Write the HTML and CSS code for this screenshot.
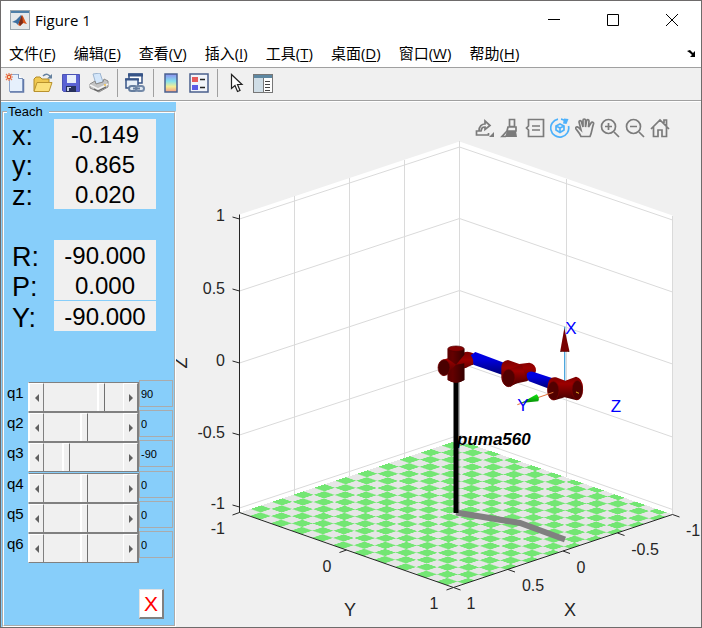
FILE: index.html
```html
<!DOCTYPE html>
<html lang="zh-CN">
<head>
    <meta charset="UTF-8">
    <meta name="viewport" content="width=device-width, initial-scale=1.0">
    <title>Figure 1</title>

    <link rel="stylesheet" href="styles.css">
</head>
<body>
    <header class="titlebar">
        <svg class="app-icon" viewBox="0 0 20 20">
            <rect x=".5" y=".5" width="19" height="19" fill="#e4e8ea" stroke="#9aa6ae"/>
            <rect x="1" y="1" width="18" height="2" fill="#4d7fa8"/>
            <path d="M2 12l4-2 5-5 1 2-4 8-2-2z" fill="#3c6fa0"/>
            <path d="M8 15l4-10c2 2 3 7 5 9l-4-1-3 3z" fill="#d9541a"/>
            <path d="M12 5l1 8-3 3-1-3z" fill="#7c2a16"/>
        </svg>
        <h1>Figure 1</h1>
        <div class="window-buttons">
            <button aria-label="最小化"><svg viewBox="0 0 12 12"><path d="M0 5.500h12"/></svg></button>
            <button aria-label="最大化"><svg viewBox="0 0 12 12"><path d="M.5.5h11v11H.5z"/></svg></button>
            <button aria-label="关闭"><svg viewBox="0 0 12 12"><path d="M0 0l12 12M12 0L0 12"/></svg></button>
        </div>
    </header>

    <nav class="menubar">
        <button>文件(<u>F</u>)</button>
        <button>编辑(<u>E</u>)</button>
        <button>查看(<u>V</u>)</button>
        <button>插入(<u>I</u>)</button>
        <button>工具(<u>T</u>)</button>
        <button>桌面(<u>D</u>)</button>
        <button>窗口(<u>W</u>)</button>
        <button>帮助(<u>H</u>)</button>
        <button class="dock" aria-label="停靠"><svg viewBox="0 0 10 8"><path d="M0 2l3-1 3 3 2-2v6H3l2-2-2-2z"/></svg></button>
    </nav>

    <div class="toolbar">
        <button aria-label="新建图窗">
            <svg viewBox="0 0 20 20">
                <path d="M4.500 1.500h9l4 4v13h-13z" fill="#e6f0fc" stroke="#8fa6cc"/>
                <path d="M13.500 1v4.500h4.500" fill="#fff" stroke="#7d93b8"/>
                <path d="M5 19h13.500V6" fill="none" stroke="#6178a8" stroke-width="1.500"/>
                <path d="M4 0v8M0 4h8M1 1l6 6M7 1L1 7" stroke="#ea7a50" stroke-width="1.200"/>
                <circle cx="4" cy="4" r="1.700" fill="#ffd9a8" stroke="#e0562c"/>
            </svg>
        </button>
        <button aria-label="打开">
            <svg viewBox="0 0 20 20">
                <path d="M1 18V6l2-2h4l2 2h7v4" fill="#f0c850" stroke="#b08a28"/>
                <path d="M1 18.500l3-9h15l-3 9z" fill="#fbe07a" stroke="#b9922d"/>
                <path d="M10 3c3-3 6-2 8 2" fill="none" stroke="#65819f" stroke-width="1.500"/>
                <path d="M14 5.500h5V1z" fill="#65819f"/>
            </svg>
        </button>
        <button aria-label="保存">
            <svg viewBox="0 0 20 20">
                <path d="M1.500 1.500h17v17h-16l-1-1z" fill="#5a62d4" stroke="#4b53b4"/>
                <path d="M6 2h9v8H6z" fill="#e8effb"/>
                <path d="M5 13h10v6H5z" fill="#27305c"/>
                <path d="M6 14h4v4H6z" fill="#c9d3e6"/>
                <path d="M8 15h2v3H8z" fill="#27305c"/>
            </svg>
        </button>
        <button aria-label="打印">
            <svg viewBox="0 0 20 20">
                <path d="M4 1l7-1 3 9-7 2z" fill="#d3e6fa" stroke="#9db4cf"/>
                <path d="M1 11l5-3 1 3 7-2 1-3 4 2v6l-9 5-9-4z" fill="#c4c4c4" stroke="#8a8a8a"/>
                <path d="M1 12l8 4 10-5" fill="none" stroke="#f4f4f4" stroke-width="1.500"/>
                <path d="M5 16l4 2 8-4" fill="none" stroke="#555"/>
                <circle cx="16" cy="12" r="1" fill="#f0c04a"/>
            </svg>
        </button>
        <span class="sep"></span>
        <button aria-label="链接绘图">
            <svg viewBox="0 0 20 20">
                <rect x="4" y="1" width="13" height="9" fill="#fff" stroke="#375487" stroke-width="1.500"/>
                <path d="M3 2h15" stroke="#375487" stroke-width="3"/>
                <rect x="1" y="6" width="12" height="9" fill="#e9f0f8" stroke="#375487" stroke-width="1.500"/>
                <path d="M0 6.500h14" stroke="#375487" stroke-width="2"/>
                <rect x="4" y="13" width="8" height="5" rx="2.500" fill="#dfe8f2" stroke="#657d9e" stroke-width="2"/>
                <rect x="11" y="13" width="8" height="5" rx="2.500" fill="#dfe8f2" stroke="#7389a8" stroke-width="2"/>
                <path d="M8 15.500h7" stroke="#657d9e" stroke-width="2"/>
            </svg>
        </button>
        <span class="sep"></span>
        <button aria-label="插入颜色栏">
            <svg viewBox="0 0 20 20">
                <defs>
                    <linearGradient id="colorbar" x2="0" y2="1">
                        <stop offset="0" stop-color="#8d8df0"/>
                        <stop offset=".4" stop-color="#84e2ee"/>
                        <stop offset=".7" stop-color="#f4ee94"/>
                        <stop offset="1" stop-color="#f39a85"/>
                    </linearGradient>
                </defs>
                <rect x="4" y="1" width="12" height="18" fill="url(#colorbar)" stroke="#4a6190" stroke-width="1.500"/>
            </svg>
        </button>
        <button aria-label="插入图例">
            <svg viewBox="0 0 20 20">
                <rect x="1" y="1" width="18" height="18" fill="#f1f4fa" stroke="#4a5f8c" stroke-width="1.500"/>
                <path d="M3 4h6v5H3z" fill="#e65a5a"/>
                <path d="M3 12h6v5H3z" fill="#5b5be6"/>
                <path d="M11 6.500h5M11 14.500h5" stroke="#222" stroke-width="1.500"/>
            </svg>
        </button>
        <span class="sep"></span>
        <button aria-label="编辑绘图">
            <svg viewBox="0 0 20 20">
                <path d="M6.500 1.500v14l3.500-3 2.500 6 2.500-1-2.500-6h4.500z" fill="#fff" stroke="#222" stroke-width="1.200"/>
            </svg>
        </button>
        <button aria-label="属性检查器">
            <svg viewBox="0 0 20 20">
                <rect x=".5" y="1.500" width="19" height="18" fill="#fdfdfd" stroke="#777"/>
                <path d="M1 2h18v3H1z" fill="#5d87a1"/>
                <path d="M1 5h9v14H1z" fill="#cfdde6"/>
                <path d="M10.500 5v14" stroke="#777"/>
                <path d="M12 8.500h5M12 11.500h5M12 14.500h5M12 17.500h5" stroke="#444"/>
            </svg>
        </button>
    </div>

    <main class="figure">
        <aside class="sidebar">
            <fieldset class="teach">
                <legend>Teach</legend>

                <div class="pose">
                    <div class="pose-row"><label for="pos-x">x:</label><output id="pos-x">-0.149</output></div>
                    <div class="pose-row"><label for="pos-y">y:</label><output id="pos-y">0.865</output></div>
                    <div class="pose-row"><label for="pos-z">z:</label><output id="pos-z">0.020</output></div>
                </div>
                <div class="pose">
                    <div class="pose-row"><label for="rot-r">R:</label><output id="rot-r">-90.000</output></div>
                    <div class="pose-row"><label for="rot-p">P:</label><output id="rot-p">0.000</output></div>
                    <div class="pose-row split"><label for="rot-y">Y:</label><output id="rot-y">-90.000</output></div>
                </div>

                <div class="joints">
                    <div class="joint">
                        <label for="q1">q1</label>
                        <div class="slider"><button class="prev" aria-label="q1 -"></button><input type="range" id="q1" min="-180" max="180" value="90"><button class="next" aria-label="q1 +"></button></div>
                        <input type="text" aria-label="q1" value="90">
                    </div>
                    <div class="joint">
                        <label for="q2">q2</label>
                        <div class="slider"><button class="prev" aria-label="q2 -"></button><input type="range" id="q2" min="-180" max="180" value="0"><button class="next" aria-label="q2 +"></button></div>
                        <input type="text" aria-label="q2" value="0">
                    </div>
                    <div class="joint">
                        <label for="q3">q3</label>
                        <div class="slider"><button class="prev" aria-label="q3 -"></button><input type="range" id="q3" min="-180" max="180" value="-90"><button class="next" aria-label="q3 +"></button></div>
                        <input type="text" aria-label="q3" value="-90">
                    </div>
                    <div class="joint split">
                        <label for="q4">q4</label>
                        <div class="slider"><button class="prev" aria-label="q4 -"></button><input type="range" id="q4" min="-180" max="180" value="0"><button class="next" aria-label="q4 +"></button></div>
                        <input type="text" aria-label="q4" value="0">
                    </div>
                    <div class="joint">
                        <label for="q5">q5</label>
                        <div class="slider"><button class="prev" aria-label="q5 -"></button><input type="range" id="q5" min="-180" max="180" value="0"><button class="next" aria-label="q5 +"></button></div>
                        <input type="text" aria-label="q5" value="0">
                    </div>
                    <div class="joint">
                        <label for="q6">q6</label>
                        <div class="slider"><button class="prev" aria-label="q6 -"></button><input type="range" id="q6" min="-180" max="180" value="0"><button class="next" aria-label="q6 +"></button></div>
                        <input type="text" aria-label="q6" value="0">
                    </div>
                </div>

                <button class="quit">X</button>
            </fieldset>
        </aside>

        <section class="plot">
            <div class="axes-tools">
                <button aria-label="导出">
                    <svg viewBox="0 0 20 20"><path d="M5 13H1.500v4h12v-2M4 13c0-5 3-7 6-7V3l5 4.500-5 4V9c-3 0-3 1-4 4z"/><path class="solid" d="M19 14v5h-5z"/></svg>
                </button>
                <button aria-label="刷亮">
                    <svg viewBox="0 0 20 20"><path d="M9.500 1.500h5v7h-5zM8 9h8v4H7zM7 13l-5 5.500h4"/><path class="solid" d="M7 13h9l1 6H5z"/></svg>
                </button>
                <button aria-label="数据提示">
                    <svg viewBox="0 0 20 20"><path d="M3.500 1.500h15v17h-15V12l-2-2 2-2zM7 8h8M7 12h8"/></svg>
                </button>
                <button class="active" aria-label="三维旋转">
                    <svg viewBox="0 0 20 20"><path d="M8 1.200A9 9 0 1 0 18.500 8M10 6l4 2v4l-4 2.500L6 12V8zM6 8l4 2 4-2M10 10v4M11 1.200a9 9 0 0 1 3 1"/><path class="solid" d="M13 5.500l1-5 4.500.5-2 5z"/></svg>
                </button>
                <button aria-label="平移">
                    <svg viewBox="0 0 20 20"><path d="M6 18.500c-1-3-3-5-5-7.500-1-2 1-3 3-1l2 2L4 4c0-1.500 2-2 2.500 0L8 9V2.500c0-2 2.500-2 2.500 0V9l1-6c.5-2 2.500-1.500 2.500 0L13.500 9 16 5c1-1.500 3-.5 2.500 1C17 10 17 14 15 18.500z"/></svg>
                </button>
                <button aria-label="放大">
                    <svg viewBox="0 0 20 20"><circle cx="8.500" cy="8.500" r="7"/><path d="M14 14l5 5M5 8.500h7M8.500 5v7"/></svg>
                </button>
                <button aria-label="缩小">
                    <svg viewBox="0 0 20 20"><circle cx="8.500" cy="8.500" r="7"/><path d="M14 14l5 5M5 8.500h7"/></svg>
                </button>
                <button aria-label="还原视图">
                    <svg viewBox="0 0 20 20"><path d="M1 11l9-9 9 9M3.500 9v9.500H8V12h4v6.500h4.500V9M14 5V2h2.500v6"/></svg>
                </button>
            </div>

            <svg class="axes" viewBox="176 102 525 525">
                <defs>
                    <!-- one 2x2 block of floor tiles, skewed into the floor plane -->
                    <pattern id="tiles" width="2" height="2" patternUnits="userSpaceOnUse"
                        patternTransform="matrix(10.63 -3.52 10.37 3.64 239.5 512.300)">
                        <rect width="2" height="2" fill="#e6e6e6"/>
                        <rect x="1" width="1" height="1" fill="#73e673"/>
                        <rect y="1" width="1" height="1" fill="#73e673"/>
                    </pattern>
                    <linearGradient id="post">
                        <stop offset="0" stop-color="#5a0000"/>
                        <stop offset=".3" stop-color="#640000"/>
                        <stop offset="1" stop-color="#360000"/>
                    </linearGradient>
                    <linearGradient id="drum" x2="0" y2="1">
                        <stop offset="0" stop-color="#7c0000"/>
                        <stop offset=".3" stop-color="#9c0000"/>
                        <stop offset="1" stop-color="#420000"/>
                    </linearGradient>
                    <linearGradient id="link" x2="0" y2="1">
                        <stop offset=".3" stop-color="#0000e0"/>
                        <stop offset="1" stop-color="#000070"/>
                    </linearGradient>
                    <linearGradient id="tip" x2="0" y2="1">
                        <stop offset="0" stop-color="#11e611"/>
                        <stop offset="1" stop-color="#068a06"/>
                    </linearGradient>
                </defs>

                <!-- walls and floor -->
                <path d="M239.500 214.500L459.500 141.500 672.500 215.500V514.500L453.500 587.500 239.500 512.500z" fill="#fff"/>
                <path class="grid" d="M294.500 196V494M349.500 178V476M404.500 160V458M459.500 141V440M566.500 179V477M672.500 216V514"/>
                <path class="grid" d="M239.500 219L459.500 147 672.500 220M239.500 291L459.500 218.500 672.500 292M239.500 363L459.500 290.500 672.500 364M239.500 435L459.500 363 672.500 437M239.500 508L459.500 435 672.500 509.500"/>
                <path class="floor" d="M239.500 512.500L459 440 672.500 514.500 453.500 587.500z" fill="url(#tiles)"/>
                <path class="axis" d="M239.500 214.500V512.500L453.500 587.500 672.500 514.500"/>
                <path class="axis" d="M239.500 219l-7-2M239.500 291l-7-2M239.500 363l-7-2M239.500 435l-7-2M239.500 507l-7-2"/>
                <path class="axis" d="M239.500 512.500l-7 2.500M346.500 550l-7 2.500M453.500 587.500l-7 2.500M672.500 514.500l7 2.500M617.500 533l7 2.500M563 551l7 2.500M508 569.500l7 2.500M453.500 587.500l7 2.500"/>

                <g class="ticks end">
                    <text x="225" y="221">1</text>
                    <text x="225" y="294">0.5</text>
                    <text x="225" y="366">0</text>
                    <text x="225" y="438">-0.5</text>
                    <text x="225" y="509">-1</text>
                    <text x="225" y="534">-1</text>
                </g>
                <g class="ticks">
                    <text x="327" y="572">0</text>
                    <text x="434" y="609">1</text>
                    <text x="471" y="609">1</text>
                    <text x="533" y="591">0.5</text>
                    <text x="581" y="573">0</text>
                    <text x="645" y="555">-0.5</text>
                    <text x="693" y="536">-1</text>
                </g>
                <g class="names">
                    <text x="350" y="616">Y</text>
                    <text x="570" y="616">X</text>
                    <text transform="translate(187 363) rotate(-90)">Z</text>
                </g>

                <!-- shadow on the floor and the base column -->
                <path d="M456 512.500L520 523 565 539.500" fill="none" stroke="#808080" stroke-width="6"/>
                <path d="M459 380V511" stroke="#999"/>
                <path d="M456 380V513" stroke="#000" stroke-width="5"/>

                <!-- arm, drawn on a grid three times finer than the axes -->
                <g transform="translate(430 310) scale(.33333)">
                    <path d="M100 128q14-6 30 2v34l-30 8z" fill="url(#drum)"/>
                    <path d="M122 136l14-10 90 34-6 36-90-32z" fill="url(#link)"/>
                    <path d="M53 116v94q25 16 50 0v-94z" fill="url(#post)"/>
                    <path d="M38 149L112 128Q132 138 130 162L112 172 38 198z" fill="url(#drum)"/>
                    <path d="M53 190v20q25 16 50 0V160l-25 4z" fill="url(#post)"/>
                    <path d="M53 116v30l25 18 25-30v-18z" fill="url(#post)"/>
                    <ellipse cx="78" cy="116" rx="24" ry="8" fill="#850000" stroke="#500000" stroke-width="2"/>
                    <ellipse cx="42" cy="173" rx="18" ry="24" fill="#4a0000" stroke="#7b0000" stroke-width="2"/>

                    <path d="M214 170Q216 152 234 150L268 162 298 158Q318 162 318 182L312 202 290 214 262 220 234 230Q212 222 214 196z" fill="url(#drum)"/>
                    <path d="M232 180L276 164 288 204 240 230z" fill="url(#drum)"/>
                    <ellipse cx="236" cy="204" rx="19" ry="26" fill="#520000" stroke="#7b0000" stroke-width="2"/>

                    <path d="M291 190q8-8 20-4l62 20-12 32-64-24q-10-12-6-24z" fill="url(#link)"/>
                    <path d="M404 214V50" stroke="#4da6dc" stroke-width="4"/>
                    <path d="M403 54l15 68q-12 7-27 0z" fill="#780000"/>
                    <path d="M391 122q14 7 27 0v4h-27z" fill="#400000"/>

                    <path d="M354 222Q358 198 378 202L406 212 438 200Q458 204 459 234 456 270 440 271L404 262 374 271Q352 266 352 236z" fill="url(#drum)"/>
                    <ellipse cx="370" cy="242" rx="17" ry="28" fill="#520000" stroke="#800000" stroke-width="2"/>
                    <ellipse cx="442" cy="240" rx="16" ry="29" fill="#520000" stroke="#800000" stroke-width="2"/>
                    <path d="M438 246l9 4" stroke="#e6b422" stroke-width="3"/>
                    <path d="M370 247L262 284" stroke="#e0713a" stroke-width="3"/>
                    <path d="M273 279l47-26q10 10 5 21z" fill="url(#tip)"/>
                </g>

                <g class="frame">
                    <text x="571" y="334">X</text>
                    <text x="523" y="411">Y</text>
                    <text x="616" y="412">Z</text>
                </g>
                <text class="robot" x="457" y="445">puma560</text>
            </svg>
        </section>
    </main>
</body>
</html>
```

FILE: styles.css
```css
* {
    box-sizing: border-box;
}
body {
    margin: 0;
    min-height: 100vh;
    display: flex;
    flex-direction: column;
    border: 1px solid #6e6b6b;
    background: #f0f0f0;
    color: #000;
    font-family: "Liberation Sans", "Noto Sans CJK SC", sans-serif;
}
button {
    margin: 0;
    padding: 0;
    border: 0;
    background: none;
    font: inherit;
    color: inherit;
}
svg {
    display: block;
}

/* window frame */
.titlebar,
.menubar {
    display: flex;
    align-items: center;
    background: #fff;
    font-family: "Open Sans", "Noto Sans CJK SC", sans-serif;
    font-size: 15px;
}
.titlebar {
    height: 37px;
    padding-left: 9px;
}
.titlebar h1 {
    margin: 0 auto 0 5px;
    font-size: 15px;
    font-weight: normal;
}
.app-icon {
    width: 20px;
    height: 20px;
}
.window-buttons {
    display: flex;
}
.window-buttons button {
    width: 59px;
    height: 37px;
}
.window-buttons svg {
    width: 12px;
    height: 12px;
    margin: auto;
    fill: none;
    stroke: #000;
}
.menubar {
    height: 30px;
    padding-right: 1px;
    border-bottom: 1px solid #a0a0a0;
}
.menubar button {
    padding: 0 10px 0 8px;
    line-height: 26px;
}
.menubar u {
    text-underline-offset: 2px;
}
.menubar .dock {
    margin-left: auto;
    padding: 0 3px;
}
.dock svg {
    width: 10px;
    height: 8px;
}

.toolbar {
    display: flex;
    align-items: center;
    gap: 8px;
    height: 33px;
    padding: 0 4px 2px;
    border-bottom: 1px solid #a0a0a0;
}
.toolbar button,
.toolbar svg {
    width: 20px;
    height: 20px;
}
.sep {
    width: 1px;
    height: 28px;
    margin-right: -1px;
    background: #a0a0a0;
}

.figure {
    flex: 1;
    display: flex;
    border-top: 1px solid #fff;
}

/* teach panel */
.sidebar {
    flex: 0 0 175px;
    display: flex;
    padding: 2px 0 0 1px;
    background: #87cefa;
}
.teach {
    flex: 1;
    min-width: 0;
    margin: 0;
    padding: 0;
    border: 2px groove #fff;
}
.teach legend {
    margin-left: 3px;
    padding: 0 6px 0 1px;
    font-size: 13px;
    line-height: 15px;
}
.pose {
    margin-bottom: 31px;
    padding-left: 8px;
}
.pose-row {
    display: flex;
    height: 30px;
}
.pose-row.split,
.joint.split {
    margin-top: 1px;
}
.pose label {
    width: 42px;
    font-size: 27px;
    line-height: 34px;
}
.pose output {
    width: 102px;
    background: #f0f0f0;
    font-size: 24px;
    line-height: 31px;
    text-align: center;
}
.joints {
    margin-top: 49px;
    padding-left: 3px;
}
.joint {
    display: flex;
    height: 30px;
}
.joint label {
    width: 21px;
    font-size: 15px;
    line-height: 25px;
}
.slider {
    display: flex;
    width: 111px;
    height: 30px;
    margin-top: 2px;
    border: 1px solid #808080;
    border-left-color: #fff;
    background: #f0f0f0;
}
.slider button {
    display: flex;
    align-items: center;
    justify-content: center;
    width: 15px;
    border: 1px solid #fff;
    border-right-color: #808080;
    border-bottom: 0;
}
.slider .prev::before,
.slider .next::before {
    content: "";
    border: 4px solid transparent;
}
.slider .prev::before {
    border-left-width: 0;
    border-right-color: #606060;
}
.slider .next::before {
    border-right-width: 0;
    border-left-color: #606060;
}
.slider input {
    flex: 1;
    min-width: 0;
    margin: 0;
    background: none;
    -webkit-appearance: none;
    appearance: none;
}
.slider input::-webkit-slider-thumb {
    -webkit-appearance: none;
    appearance: none;
    width: 8px;
    height: 28px;
    border: solid;
    border-width: 1px 1px 0 2px;
    border-color: #fff #707070 #707070 #fff;
    background: #f0f0f0;
}
.joint input[type="text"] {
    width: 34px;
    height: 27px;
    padding: 0 0 0 1px;
    border: 1px solid #ababab;
    background: none;
    font: 11px "Liberation Sans", sans-serif;
}
.quit {
    display: block;
    width: 25px;
    height: 30px;
    margin: 28px 10px 0 auto;
    border: solid;
    border-width: 1px 2px 2px 1px;
    border-color: #e3e3e3 #808080 #808080 #e3e3e3;
    background: #fff;
    color: #f00;
    font-size: 21px;
    line-height: 26px;
}

/* 3-D axes */
.plot {
    position: relative;
    flex: 1;
    min-width: 0;
}
.axes-tools {
    position: absolute;
    top: 16px;
    right: 31px;
    display: flex;
    gap: 5px;
}
.axes-tools button,
.axes-tools svg {
    width: 20px;
    height: 20px;
}
.axes-tools svg {
    fill: none;
    stroke: #7b7b7b;
    stroke-width: 1.7;
}
.axes-tools .solid {
    fill: #7b7b7b;
    stroke: none;
}
.axes-tools .active svg {
    stroke: #4db1fb;
}
.axes-tools .active .solid {
    fill: #4db1fb;
}
.axes {
    width: 100%;
}
.grid {
    fill: none;
    stroke: #dadada;
}
.floor {
    shape-rendering: crispEdges;
}
.axis {
    fill: none;
    stroke: #262626;
}
.ticks,
.names,
.frame {
    fill: #262626;
    font-size: 16px;
    text-anchor: middle;
}
.ticks.end {
    text-anchor: end;
}
.names {
    font-size: 18px;
}
.frame {
    fill: #00f;
    font-size: 17px;
}
.robot {
    font-size: 17px;
    font-style: italic;
    font-weight: bold;
}
```
